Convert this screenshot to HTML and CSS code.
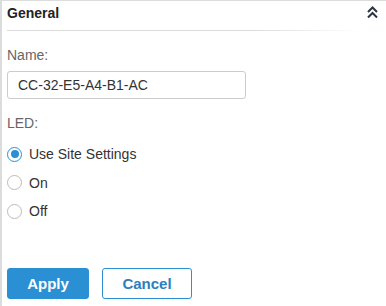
FILE: index.html
```html
<!DOCTYPE html>
<html lang="en">
<head>
  <meta charset="UTF-8">
  <title>General</title>
  <link rel="stylesheet" href="styles.css">
</head>
<body>
  <div class="panel">
    <div class="panel-head">
      <span class="panel-title">General</span>
      <svg class="collapse" width="11" height="13" viewBox="0 0 11 13">
        <path d="M1 6 L5.5 1.5 L10 6 M1 11.5 L5.5 7 L10 11.5" fill="none" stroke="#2b3440" stroke-width="2"/>
      </svg>
    </div>
    <div class="divider"></div>

    <form class="panel-body">
      <div class="field">
        <label class="field-label">Name:</label>
        <input class="text-input" type="text" value="CC-32-E5-A4-B1-AC">
      </div>

      <div class="field">
        <div class="field-label led-label">LED:</div>
        <label class="radio"><span class="dot checked"></span>Use Site Settings</label>
        <label class="radio"><span class="dot"></span>On</label>
        <label class="radio"><span class="dot"></span>Off</label>
      </div>

      <div class="actions">
        <button type="button" class="btn btn-primary">Apply</button>
        <button type="button" class="btn btn-outline">Cancel</button>
      </div>
    </form>
  </div>
</body>
</html>
```

FILE: styles.css
```css
html, body { margin: 0; padding: 0; background: #fff; }
body { font-family: "Liberation Sans", Arial, sans-serif; }
.panel { border-left: 2px solid #dcdcdc; border-top: 1px solid #dcdcdc; height: 305px; padding-left: 5px; }
.panel-head { display: flex; align-items: center; justify-content: space-between; height: 24px; padding-right: 8px; }
.panel-title { font-size: 14px; font-weight: bold; color: #222; }
.collapse { margin-top: -1px; }
.divider { height: 1px; margin-top: 5px; margin-right: 26px; background: linear-gradient(to right, #dcdcdc, #dcdcdc 70%, rgba(220,220,220,0)); }
.panel-body { margin: 0; padding-top: 15px; }
.field { margin-bottom: 10px; }
.field-label { display: block; font-size: 14px; color: #666; margin-bottom: 7px; line-height: 18px; }
.led-label { margin-bottom: 8px; }
.text-input { box-sizing: border-box; width: 239px; height: 28px; border: 1px solid #ccc; border-radius: 3px; padding: 0 10px; font-family: inherit; font-size: 14px; color: #333; margin: 0 0 5px 0; }
.radio { display: flex; align-items: center; height: 28.5px; font-size: 14px; color: #333; }
.dot { box-sizing: border-box; width: 15px; height: 15px; border: 1px solid #bbb; border-radius: 50%; margin-right: 7px; position: relative; }
.dot.checked { border-color: #2b8fd3; }
.dot.checked::after { content: ""; position: absolute; left: 2.5px; top: 2.5px; width: 8px; height: 8px; border-radius: 50%; background: #2b8fd3; }
.actions { display: flex; gap: 13px; margin-top: 42px; }
.btn { box-sizing: border-box; height: 31px; border-radius: 3px; font-family: inherit; font-size: 15px; font-weight: bold; cursor: pointer; padding: 0; }
.btn-primary { width: 82px; background: #2b8fd3; color: #fff; border: 1px solid #2b8fd3; }
.btn-outline { width: 90px; background: #fff; color: #2b7fc0; border: 1px solid #2b8fd3; }
```
